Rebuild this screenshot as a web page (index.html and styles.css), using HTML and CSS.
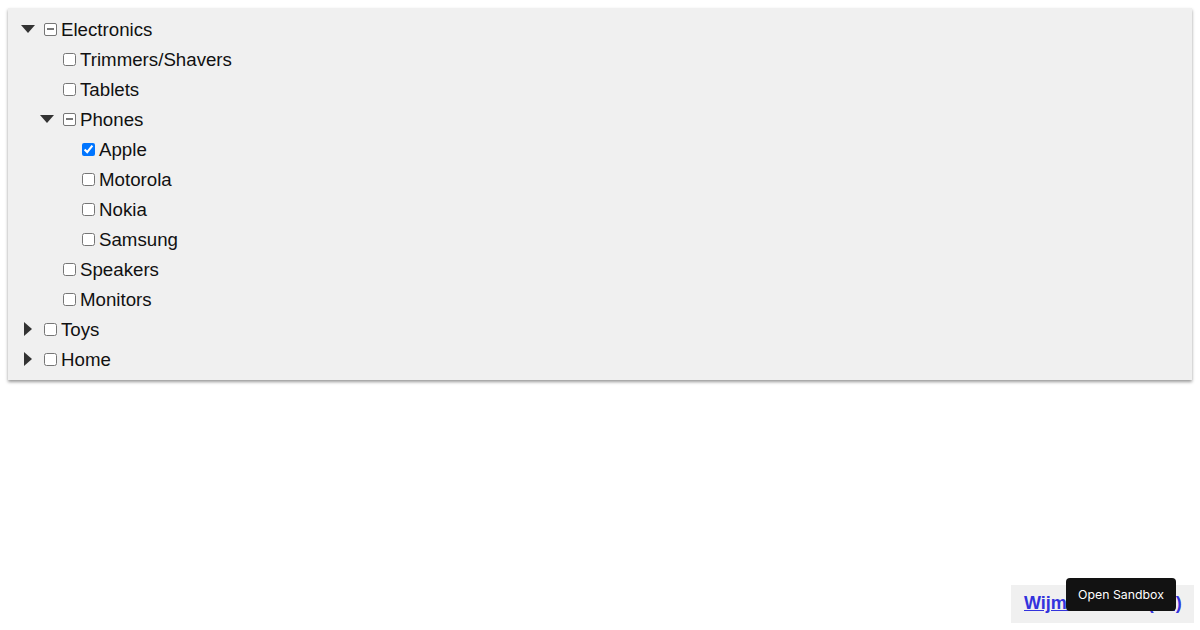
FILE: index.html
```html
<!DOCTYPE html>
<html>
<head>
<meta charset="utf-8">
<link rel="stylesheet" href="styles.css">
</head>
<body>
<div class="tree">
  <div class="row l0"><span class="tg down"></span><span class="indbox"></span><span class="lbl">Electronics</span></div>
  <div class="row l1"><span class="tg"></span><input type="checkbox"><span class="lbl">Trimmers/Shavers</span></div>
  <div class="row l1"><span class="tg"></span><input type="checkbox"><span class="lbl">Tablets</span></div>
  <div class="row l0b"><span class="tg down"></span><span class="indbox"></span><span class="lbl">Phones</span></div>
  <div class="row l2"><span class="tg"></span><input type="checkbox" checked><span class="lbl">Apple</span></div>
  <div class="row l2"><span class="tg"></span><input type="checkbox"><span class="lbl">Motorola</span></div>
  <div class="row l2"><span class="tg"></span><input type="checkbox"><span class="lbl">Nokia</span></div>
  <div class="row l2"><span class="tg"></span><input type="checkbox"><span class="lbl">Samsung</span></div>
  <div class="row l1"><span class="tg"></span><input type="checkbox"><span class="lbl">Speakers</span></div>
  <div class="row l1"><span class="tg"></span><input type="checkbox"><span class="lbl">Monitors</span></div>
  <div class="row l0"><span class="tg right"></span><input type="checkbox"><span class="lbl">Toys</span></div>
  <div class="row l0"><span class="tg right"></span><input type="checkbox"><span class="lbl">Home</span></div>
</div>
<div class="credit"><a href="#" class="credit-link">Wijmo Demos (JS)</a></div>
<div class="tip">Open Sandbox</div>
</body>
</html>
```
FILE: styles.css
```css
html, body { margin: 0; padding: 0; background: #fff; }
body { padding: 8px; font-family: "Liberation Sans", Arial, sans-serif; }
.tree {
  background: #f0f0f0;
  box-shadow: 0 2px 3px rgba(0,0,0,0.4);
  padding: 7px 0 5px 8px;
}
.row {
  height: 30px;
  display: flex;
  align-items: center;
  font-size: 18.7px;
  color: #111;
}
.l0 { padding-left: 0; }
.l0b { padding-left: 19px; }
.l1 { padding-left: 19px; }
.l2 { padding-left: 38px; }
.tg {
  width: 24px;
  height: 16px;
  margin-bottom: 2px;
  display: flex;
  align-items: center;
  justify-content: center;
  flex: none;
}
.tg.down::before {
  content: "";
  display: block;
  margin-left: -1px;
  border-left: 7px solid transparent;
  border-right: 7px solid transparent;
  border-top: 8px solid #333;
}
.tg.right::before {
  content: "";
  display: block;
  border-top: 7px solid transparent;
  border-bottom: 7px solid transparent;
  border-left: 8px solid #333;
}
.row input {
  margin: 0 4px 2px 4px;
  width: 13px;
  height: 13px;
  flex: none;
}
.indbox {
  flex: none;
  box-sizing: border-box;
  width: 13px;
  height: 13px;
  margin: 0 4px 2px 4px;
  border: 1px solid #767676;
  border-radius: 2px;
  background: #fff;
  display: flex;
  align-items: center;
  justify-content: center;
}
.indbox::before {
  content: "";
  display: block;
  width: 7px;
  height: 2px;
  background: #767676;
}
.lbl { line-height: 30px; }
.credit {
  position: fixed;
  right: 6px;
  bottom: 7px;
  width: 183px;
  height: 38px;
  box-sizing: border-box;
  padding: 8px 0 0 13px;
  background: #f0f0f0;
  font-family: "Liberation Sans", Arial, sans-serif;
  font-weight: bold;
  font-size: 18px;
  white-space: nowrap;
}
.credit-link { color: #3333dd; text-decoration: underline; }
.tip {
  position: fixed;
  left: 1066px;
  top: 578px;
  width: 110px;
  height: 33px;
  box-sizing: border-box;
  background: #121212;
  color: #fff;
  border-radius: 4px;
  font-family: Inter, "Liberation Sans", sans-serif;
  font-size: 12.3px;
  display: flex;
  align-items: center;
  justify-content: center;
}
```
